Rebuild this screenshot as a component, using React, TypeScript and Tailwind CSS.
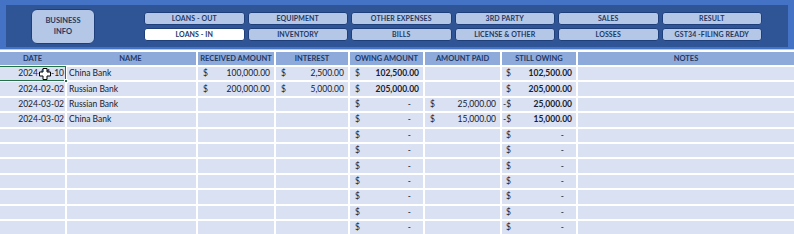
import React from 'react'

type Row = {
  date?: string
  name?: string
  rec?: string
  int?: string
  owe: string
  paid?: string
  still: string
  neg?: boolean
}

const rows: Row[] = [
  { date: '2024-01-10', name: 'China Bank', rec: '100,000.00', int: '2,500.00', owe: '102,500.00', still: '102,500.00' },
  { date: '2024-02-02', name: 'Russian Bank', rec: '200,000.00', int: '5,000.00', owe: '205,000.00', still: '205,000.00' },
  { date: '2024-03-02', name: 'Russian Bank', owe: '-', paid: '25,000.00', still: '25,000.00', neg: true },
  { date: '2024-03-02', name: 'China Bank', owe: '-', paid: '15,000.00', still: '15,000.00', neg: true },
  ...Array.from({ length: 7 }, () => ({ owe: '-', still: '-' })),
]

const navTop = ['LOANS - OUT', 'EQUIPMENT', 'OTHER EXPENSES', '3RD PARTY', 'SALES', 'RESULT']
const navBottom = ['LOANS - IN', 'INVENTORY', 'BILLS', 'LICENSE & OTHER', 'LOSSES', 'GST34 -FILING READY']

const cell = 'h-[13.4px] bg-[#d9e1f2]'

function Money({ v, bold, neg, pl = 'pl-[5px]' }: { v?: string; bold?: boolean; neg?: boolean; pl?: string }) {
  if (v === undefined) return <div className={cell} />
  return (
    <div className={`${cell} flex items-center justify-between ${neg ? 'pl-[1px]' : pl} pr-[4px]`}>
      <span>{neg ? '-$' : '$'}</span>
      <span className={v === '-' ? 'pr-[8px]' : bold ? 'font-bold' : ''}>{v}</span>
    </div>
  )
}

function NavButton({ label, active }: { label: string; active?: boolean }) {
  return (
    <div
      className={`flex h-[13px] items-center justify-center rounded-[3px] border border-[#1f3f7a] text-[7px] font-bold tracking-[0.1px] text-[#1f3864] ${
        active ? 'bg-white' : 'bg-[#b4c7e7]'
      }`}
    >
      {label}
    </div>
  )
}

export default function App() {
  return (
    <div className="relative h-[234px] w-[794px] overflow-hidden bg-white font-['Lato','Liberation_Sans',sans-serif] text-[8.5px] text-[#18202e]">
      <div className="h-[49px] bg-[#4472c4] px-[6px] pt-[5px]">
        <div className="flex h-[42px] items-center bg-[#2f5597] pl-[25px]">
          <div className="flex h-[35px] w-[64px] flex-col items-center justify-center rounded-[6px] border border-[#1f3f7a] bg-[#b4c7e7] text-[7.5px] font-bold leading-[11px] text-[#1f3864]">
            <span>BUSINESS</span>
            <span>INFO</span>
          </div>
          <div className="ml-[49px] grid w-[618px] grid-cols-6 gap-[3px]">
            {navTop.map((l) => (
              <NavButton key={l} label={l} />
            ))}
            {navBottom.map((l) => (
              <NavButton key={l} label={l} active={l === 'LOANS - IN'} />
            ))}
          </div>
        </div>
      </div>
      <div className="h-[1px] bg-[#b4c7e7]" />

      <div className="mt-[2px] grid grid-cols-[65px_129px_76px_72px_73px_75px_74px_216px] gap-[2px]">
        <div className="col-span-2 flex h-[13px] items-center bg-[#8eaadb] text-[7.5px] font-bold text-[#1f3864]">
          <span className="w-[65px] text-center">DATE</span>
          <span className="flex-1 text-center">NAME</span>
        </div>
        {['RECEIVED AMOUNT', 'INTEREST', 'OWING AMOUNT', 'AMOUNT PAID', 'STILL OWING', 'NOTES'].map((h) => (
          <div key={h} className="flex h-[13px] items-center justify-center bg-[#8eaadb] text-[7.5px] font-bold text-[#1f3864]">
            {h}
          </div>
        ))}

        {rows.map((r, i) => (
          <React.Fragment key={i}>
            <div className={`${cell} relative flex items-center justify-end pr-[1px]`}>
              {r.date}
              {i === 0 && (
                <>
                  <div className="absolute inset-[-1px] border border-[#217346]" />
                  <div className="absolute bottom-[-3px] right-[-3px] h-[4px] w-[4px] border border-white bg-[#217346]" />
                  <svg className="absolute left-[39px] top-[1px]" width="12" height="12" viewBox="0 0 12 12">
                    <path d="M4 0.5h4v3.5h3.5v4H8v3.5H4V8H0.5V4H4z" fill="#fff" stroke="#000" strokeWidth="1" />
                  </svg>
                </>
              )}
            </div>
            <div className={`${cell} flex items-center pl-[2px]`}>{r.name}</div>
            <Money v={r.rec} />
            <Money v={r.int} />
            <Money v={r.owe} bold />
            <Money v={r.paid} />
            <Money v={r.still} bold neg={r.neg} pl="pl-[4px]" />
            <div className={cell} />
          </React.Fragment>
        ))}
      </div>
    </div>
  )
}
